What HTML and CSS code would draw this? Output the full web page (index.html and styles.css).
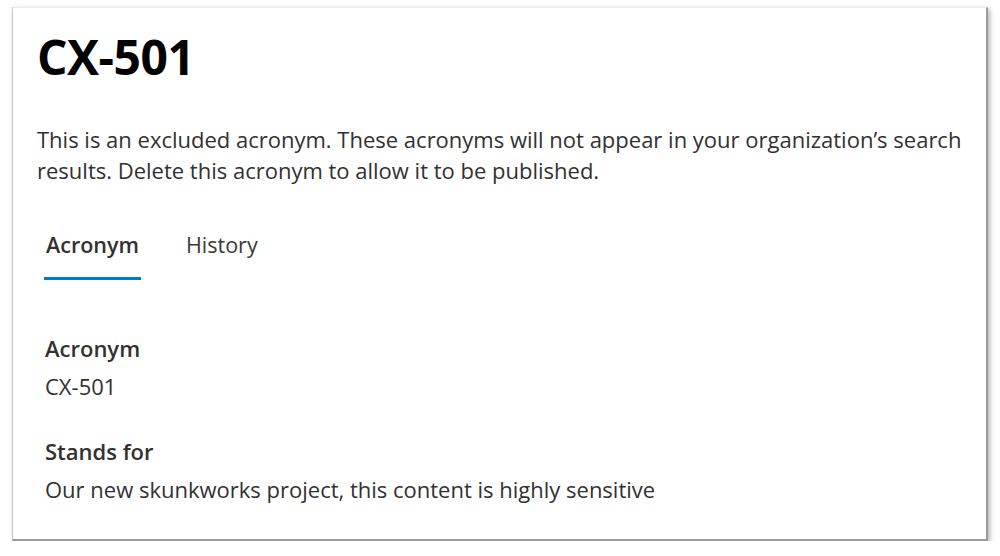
FILE: index.html
```html
<!DOCTYPE html>
<html>
<head>
  <title>CX-501</title>
  <link rel="stylesheet" href="styles.css">
</head>
<body>
  <div class="card">
    <h1>CX-501</h1>
    <p class="notice">This is an excluded acronym. These acronyms will not appear in your organization’s search results. Delete this acronym to allow it to be published.</p>

    <div class="tabs">
      <div class="tab active">Acronym</div>
      <div class="tab">History</div>
    </div>

    <div class="field">
      <div class="label">Acronym</div>
      <div class="value">CX-501</div>
    </div>
    <div class="field">
      <div class="label">Stands for</div>
      <div class="value">Our new skunkworks project, this content is highly sensitive</div>
    </div>
  </div>
</body>
</html>
```

FILE: styles.css
```css
body {
  margin: 0;
  padding: 7px 12px 0 12px;
  background-color: #fff;
  font-family: "Open Sans", "Noto Sans", Arial, sans-serif;
  color: #323130;
}

.card {
  width: 976px;
  height: 534px;
  box-sizing: border-box;
  padding: 17px 24px 0 24px;
  border-left: 1px solid #c8c8c8;
  border-top: 1px solid #ececec;
  border-right: 2px solid #9a9a9a;
  border-bottom: 2px solid #9a9a9a;
  box-shadow: 2px 2px 5px rgba(0, 0, 0, 0.3);
}

h1 {
  margin: 0;
  font-size: 48px;
  font-weight: 700;
  color: #000;
  line-height: 64px;
  letter-spacing: -0.5px;
}

.notice {
  margin: 35px 0 0 0;
  font-size: 22px;
  line-height: 31px;
}

.tabs {
  display: flex;
  gap: 43px;
  margin-top: 44px;
  padding-left: 7px;
}

.tab {
  font-size: 21.5px;
  line-height: 30px;
  padding: 0 2px 17px 2px;
  color: #3b3a39;
}

.tab.active {
  font-weight: 600;
  color: #323130;
  border-bottom: 3px solid #0078d4;
}

.field {
  padding-left: 8px;
  margin-top: 53px;
}

.field + .field {
  margin-top: 35px;
}

.label {
  font-size: 22px;
  font-weight: 600;
  line-height: 30px;
}

.value {
  font-size: 22px;
  line-height: 30px;
  margin-top: 8px;
}
```
